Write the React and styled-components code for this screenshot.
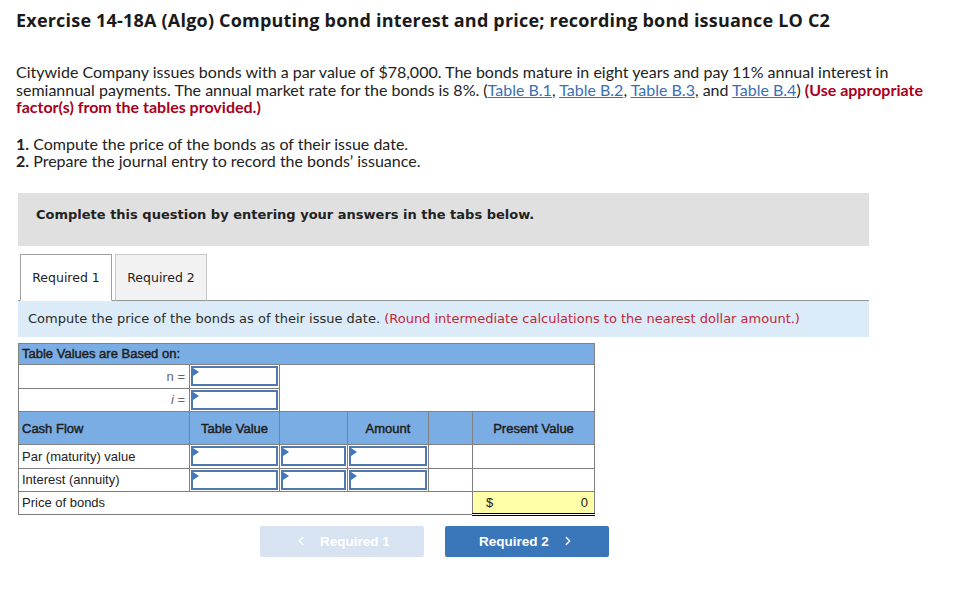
import React from "react";
import styled, { createGlobalStyle } from "styled-components";
import { ChevronLeft, ChevronRight } from "lucide-react";

const GlobalStyle = createGlobalStyle`
  body {
    margin: 0;
    background: #fff;
    font-family: Lato, "Open Sans", sans-serif;
    color: #222;
  }
`;

const App = () => {
  return (
    <Page>
      <GlobalStyle />
      <Title>Exercise 14-18A (Algo) Computing bond interest and price; recording bond issuance LO C2</Title>
      <Intro>
        Citywide Company issues bonds with a par value of $78,000. The bonds mature in eight years and pay 11% annual interest in
        <br />
        semiannual payments. The annual market rate for the bonds is 8%. (<Link>Table B.1</Link>, <Link>Table B.2</Link>,{" "}
        <Link>Table B.3</Link>, and <Link>Table B.4</Link>) <Warn>(Use appropriate</Warn>
        <br />
        <Warn>factor(s) from the tables provided.)</Warn>
      </Intro>
      <Steps>
        <div><b>1.</b> Compute the price of the bonds as of their issue date.</div>
        <div><b>2.</b> Prepare the journal entry to record the bonds’ issuance.</div>
      </Steps>

      <Notice>Complete this question by entering your answers in the tabs below.</Notice>

      <TabBar>
        <Tab $active>Required 1</Tab>
        <Tab>Required 2</Tab>
      </TabBar>
      <Instruction>
        Compute the price of the bonds as of their issue date.{" "}
        <RedNote>(Round intermediate calculations to the nearest dollar amount.)</RedNote>
      </Instruction>

      <Grid>
        <colgroup>
          <col style={{ width: 171 }} />
          <col style={{ width: 90 }} />
          <col style={{ width: 68 }} />
          <col style={{ width: 81 }} />
          <col style={{ width: 44 }} />
          <col style={{ width: 122 }} />
        </colgroup>
        <tbody>
          <tr>
            <Head colSpan={6} $left>Table Values are Based on:</Head>
          </tr>
          <tr>
            <Label $right>n =</Label>
            <InputCell><Field /></InputCell>
            <Blank colSpan={4} rowSpan={2} />
          </tr>
          <tr>
            <Label $right><i>i</i> =</Label>
            <InputCell><Field /></InputCell>
          </tr>
          <HeadRow>
            <Head $left>Cash Flow</Head>
            <Head>Table Value</Head>
            <Head />
            <Head>Amount</Head>
            <Head />
            <Head>Present Value</Head>
          </HeadRow>
          <tr>
            <Label>Par (maturity) value</Label>
            <InputCell><Field /></InputCell>
            <InputCell><Field /></InputCell>
            <InputCell><Field /></InputCell>
            <Blank />
            <Blank />
          </tr>
          <tr>
            <Label>Interest (annuity)</Label>
            <InputCell><Field /></InputCell>
            <InputCell><Field /></InputCell>
            <InputCell><Field /></InputCell>
            <Blank />
            <Blank />
          </tr>
          <tr>
            <Label colSpan={5}>Price of bonds</Label>
            <Total>
              <span>$</span>
              <span>0</span>
            </Total>
          </tr>
        </tbody>
      </Grid>

      <NavRow>
        <NavButton $disabled>
          <ChevronLeft size={14} strokeWidth={2.5} />
          Required 1
        </NavButton>
        <NavButton>
          Required 2
          <ChevronRight size={14} strokeWidth={2.5} />
        </NavButton>
      </NavRow>
    </Page>
  );
};

const Page = styled.div`
  padding: 0 16px 0 16px;
  width: 938px;
`;

const Title = styled.h1`
  margin: 0;
  padding-top: 9px;
  font-family: "Open Sans", Lato, sans-serif;
  font-size: 18px;
  letter-spacing: 0.2px;
  font-weight: 700;
  line-height: 22px;
  color: #1a1a1a;
  white-space: nowrap;
`;

const Intro = styled.p`
  margin: 32px 0 0 0;
  font-size: 16px;
  line-height: 17.5px;
  color: #222;
  white-space: nowrap;
`;

const Link = styled.a`
  color: #3b6fb4;
  text-decoration: underline;
`;

const Warn = styled.span`
  color: #a8001c;
  font-weight: 700;
`;

const Steps = styled.div`
  margin-top: 19px;
  font-size: 16px;
  line-height: 17.5px;

  b {
    font-weight: 700;
  }
`;

const Notice = styled.div`
  margin: 23px 0 0 2px;
  width: 851px;
  height: 53px;
  box-sizing: border-box;
  padding: 14px 18px 0 18px;
  background: #e0e0e0;
  font-family: "DejaVu Sans", Verdana, sans-serif;
  font-size: 13px;
  font-weight: 700;
  color: #222;
`;

const TabBar = styled.div`
  margin: 8px 0 0 2px;
  width: 851px;
  display: flex;
  gap: 3px;
  padding-left: 2px;
  box-sizing: border-box;
  border-bottom: 1px solid #959595;
`;

const Tab = styled.div`
  width: 92px;
  height: 47px;
  box-sizing: border-box;
  display: flex;
  align-items: center;
  justify-content: center;
  margin-bottom: -1px;
  font-family: "DejaVu Sans", Verdana, sans-serif;
  font-size: 12.5px;
  color: #222;
  background: ${(p) => (p.$active ? "#fff" : "#f2f2f2")};
  border: 1px solid ${(p) => (p.$active ? "#a0a0a0" : "#c8c8c8")};
  border-bottom: ${(p) => (p.$active ? "1px solid #fff" : "1px solid #959595")};
`;

const Instruction = styled.div`
  margin-left: 2px;
  width: 851px;
  height: 36px;
  box-sizing: border-box;
  padding: 10px 10px 0 10px;
  background: #dbebf8;
  font-family: "DejaVu Sans", Verdana, sans-serif;
  font-size: 13px;
  color: #2a2a2a;
`;

const RedNote = styled.span`
  color: #c0283a;
`;

const Grid = styled.table`
  margin: 6px 0 0 2px;
  width: 576px;
  border-collapse: collapse;
  table-layout: fixed;
  font-family: "Liberation Sans", Arial, sans-serif;
  font-size: 13px;
  color: #222;
  border: 1px solid #808080;

  td {
    border: 1px solid #808080;
    height: 20.5px;
    padding: 0;
  }
`;

const HeadRow = styled.tr`
  td {
    height: 32px;
  }
`;

const Head = styled.td`
  background: #7aade3;
  text-align: ${(p) => (p.$left ? "left" : "center")};
  padding: 0 3px !important;
  font-weight: 400;
  color: #1e1e1e;
  -webkit-text-stroke: 0.45px #1e1e1e;
`;

const Label = styled.td`
  background: #fff;
  text-align: ${(p) => (p.$right ? "right" : "left")};
  padding: 0 4px 0 3px !important;
  color: ${(p) => (p.$right ? "#666" : "#222")};
`;

const Blank = styled.td`
  background: #fff;
`;

const InputCell = styled.td`
  padding: 1px !important;
`;

const Field = styled.div`
  position: relative;
  height: 20px;
  box-sizing: border-box;
  border: 2px solid #4f78ae;
  background: #fff;

  &::before {
    content: "";
    position: absolute;
    left: 0;
    top: 0;
    border-top: 4px solid transparent;
    border-bottom: 4px solid transparent;
    border-left: 6px solid #3c79c4;
  }
`;

const Total = styled.td`
  background: #ffffa8;
  border-top: 1px solid #000 !important;
  border-bottom: 3px double #000 !important;
  padding: 0 6px 0 13px !important;

  span:first-child {
    float: left;
  }
  span:last-child {
    float: right;
  }
`;

const NavRow = styled.div`
  display: flex;
  gap: 21px;
  margin: 10px 0 0 244px;
`;

const NavButton = styled.div`
  width: 164px;
  height: 31px;
  border-radius: 2px;
  display: flex;
  align-items: center;
  justify-content: center;
  gap: 12px;
  font-family: "Liberation Sans", Arial, sans-serif;
  font-size: 13.5px;
  font-weight: 700;
  color: #fff;
  background: ${(p) => (p.$disabled ? "#d7e3f1" : "#3a76ba")};
`;

export default App;
